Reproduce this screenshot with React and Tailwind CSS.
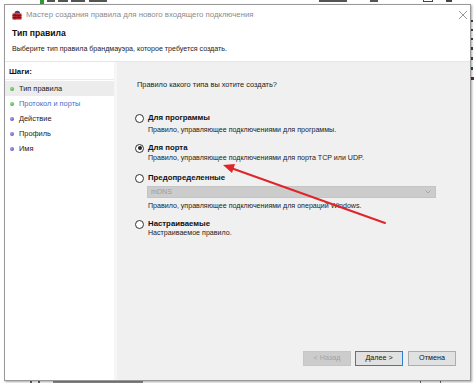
export default function App() {
  const steps = [
    { label: "Тип правила", color: "green", active: true },
    { label: "Протокол и порты", color: "green", blue: true },
    { label: "Действие", color: "purple" },
    { label: "Профиль", color: "purple" },
    { label: "Имя", color: "purple" },
  ];
  const Radio = ({ checked }) => (
    <span className="w-[9px] h-[9px] rounded-full border border-[#333] bg-white flex items-center justify-center shrink-0">
      {checked && <span className="w-[4px] h-[4px] rounded-full bg-[#222]" />}
    </span>
  );
  return (
    <div className="relative w-[474px] h-[383px] overflow-hidden bg-white font-['Liberation_Sans',Arial,sans-serif] text-[#111]">
      {/* background window fragments (bottoms of letters peeking above the dialog) */}
      <div className="absolute left-[40px] top-0 flex items-start gap-[1px]">
        <span className="w-[4px] h-[4px] bg-[#2f9a2f]" />
        <span className="ml-[2px] w-[8px] h-[2px] bg-[#555]" />
        <span className="ml-[2px] w-[10px] h-[2px] bg-[#555]" />
        <span className="ml-[2px] w-[14px] h-[2px] bg-[#555]" />
        <span className="ml-[3px] w-[18px] h-[2px] bg-[#555]" />
      </div>
      <div className="absolute left-[319px] top-0 w-[28px] h-[2px] bg-[#555]" />
      <div className="absolute left-[370px] top-0 w-[8px] h-[2px] bg-[#555]" />
      <div className="absolute left-[423px] top-[-2px] w-[10px] h-[4px] border border-[#444]" />
      <div className="absolute left-[446px] top-[0px] w-[6px] h-[2px] bg-[#444]" />
      <div className="absolute left-[471px] top-[20px] flex flex-col gap-[7px]">
        <span className="w-[2px] h-[2px] bg-[#444]" />
        <span className="w-[2px] h-[2px] bg-[#444]" />
        <span className="w-[2px] h-[2px] bg-[#444]" />
        <span className="w-[2px] h-[3px] bg-[#444]" />
        <span className="w-[2px] h-[3px] bg-[#444]" />
        <span className="w-[2px] h-[3px] bg-[#444]" />
        <span className="w-[3px] h-[3px] bg-[#5a2a5a]" />
      </div>
      <div className="absolute left-[53px] top-[381px] w-[90px] h-[2px] bg-[#8f8f8f]" />
      <div className="absolute left-[30px] top-[381px] w-[2px] h-[2px] bg-[#666]" />
      <div className="absolute left-[38px] top-[381px] w-[2px] h-[2px] bg-[#666]" />
      <div className="absolute left-[420px] top-[381px] w-[1px] h-[2px] bg-[#666]" />
      <div className="absolute left-[440px] top-[381px] w-[1px] h-[2px] bg-[#666]" />

      {/* dialog window */}
      <div className="absolute left-[4px] top-[4px] w-[467px] h-[377px] bg-white border border-[#9a9a9a] shadow-[1px_1px_2px_rgba(0,0,0,0.35)] flex flex-col">
        {/* title bar */}
        <div className="h-[20px] flex items-center pl-[7px] pr-[2px] shrink-0">
          <svg width="10" height="10" viewBox="0 0 10 10" className="shrink-0">
            <rect x="0.5" y="3.5" width="9" height="6" fill="#b0252a" />
            <path d="M0.5 5.5h9M0.5 7.5h9M3 3.5v2M6.5 5.5v2M3 7.5v2" stroke="#6e1015" strokeWidth="0.7" />
            <path d="M2.5 3.5a2.8 2.8 0 0 1 5.6 0z" fill="#5b3a5a" />
          </svg>
          <span className="ml-[4px] text-[7.8px] text-[#8b8b8b] whitespace-nowrap">
            Мастер создания правила для нового входящего подключения
          </span>
          <svg width="10" height="10" viewBox="0 0 10 10" className="ml-auto">
            <path d="M1 1L9 9M9 1L1 9" stroke="#7d7d7d" strokeWidth="0.8" />
          </svg>
        </div>
        {/* header */}
        <div className="h-[37px] shrink-0 pl-[7px] pt-[3px] border-b border-[#e6e6e6]">
          <div className="text-[8.6px] font-bold leading-[11px] text-[#111]">Тип правила</div>
          <div className="mt-[5px] text-[7.1px] leading-[10px] text-[#222]">
            Выберите тип правила брандмауэра, которое требуется создать.
          </div>
        </div>
        {/* body */}
        <div className="flex flex-1 min-h-0">
          <div className="w-[109px] shrink-0 bg-white pt-[4px]">
            <div className="pl-[4px] h-[14px] text-[7.8px] font-bold leading-[12px] border-b border-[#ececec]">Шаги:</div>
            <div className="mt-[1px] flex flex-col">
              {steps.map((s) => (
                <div
                  key={s.label}
                  className={`h-[15px] flex items-center pl-[5px] ${s.active ? "bg-[#ececec]" : ""}`}
                >
                  <span
                    className={`w-[4px] h-[4px] rounded-full shrink-0 ${
                      s.color === "green"
                        ? "bg-[radial-gradient(circle_at_35%_35%,#9be08e,#2f9a2f)]"
                        : "bg-[radial-gradient(circle_at_35%_35%,#a9a2f0,#4a3fb0)]"
                    }`}
                  />
                  <span className={`ml-[5px] text-[7.4px] whitespace-nowrap ${s.blue ? "text-[#3f6fc6]" : "text-[#1a1a1a]"}`}>
                    {s.label}
                  </span>
                </div>
              ))}
            </div>
          </div>
          <div className="flex-1 bg-[#f0f0f0] border-l-[3px] border-[#f6f6f6] flex flex-col pl-[18px] pr-[14px]">
            <div className="mt-[18px] ml-[2px] text-[7.4px] leading-[10px] text-[#1a1a1a]">
              Правило какого типа вы хотите создать?
            </div>
            <div className="mt-[23px] flex items-center gap-[4px]">
              <Radio />
              <span className="text-[7.8px] font-bold leading-[10px]">Для программы</span>
            </div>
            <div className="ml-[13px] mt-[2px] text-[7.1px] leading-[10px] text-[#222]">
              Правило, управляющее подключениями для программы.
            </div>
            <div className="mt-[8px] flex items-center gap-[4px]">
              <Radio checked />
              <span className="text-[7.8px] font-bold leading-[10px]">Для порта</span>
            </div>
            <div className="ml-[13px] mt-[0px] text-[7.1px] leading-[10px] text-[#222]">
              Правило, управляющее подключениями для порта TCP или UDP.
            </div>
            <div className="mt-[10px] flex items-center gap-[4px]">
              <Radio />
              <span className="text-[7.8px] font-bold leading-[10px]">Предопределенные</span>
            </div>
            <div className="ml-[12px] mt-[3px] mr-[20px] h-[12px] bg-[#cccccc] border border-[#c4c4c4] flex items-center pl-[3px] pr-[4px]">
              <span className="text-[7.1px] text-[#9c9c9c] leading-[10px]">mDNS</span>
              <svg width="6" height="4" viewBox="0 0 6 4" className="ml-auto">
                <path d="M0.5 0.5L3 3L5.5 0.5" stroke="#9c9c9c" strokeWidth="0.8" fill="none" />
              </svg>
            </div>
            <div className="ml-[13px] mt-[3px] text-[7.1px] leading-[10px] text-[#222]">
              Правило, управляющее подключениями для операций Windows.
            </div>
            <div className="mt-[8px] flex items-center gap-[4px]">
              <Radio />
              <span className="text-[7.8px] font-bold leading-[10px]">Настраиваемые</span>
            </div>
            <div className="ml-[13px] mt-[-1px] text-[7.1px] leading-[10px] text-[#222]">
              Настраиваемое правило.
            </div>
            <div className="mt-auto mb-[14px] flex justify-end gap-[4px]">
              <div className="w-[48px] h-[15px] bg-[#cccccc] border border-[#c6c6c6] flex items-center justify-center text-[7.2px] text-[#a3a3a3]">
                &lt; Назад
              </div>
              <div className="w-[48px] h-[15px] bg-[#e1e1e1] border-[1.5px] border-[#2a7fd4] flex items-center justify-center text-[7.2px] text-[#111]">
                Далее &gt;
              </div>
              <div className="w-[48px] h-[15px] bg-[#e1e1e1] border border-[#adadad] flex items-center justify-center text-[7.2px] text-[#111] ml-[1px]">
                Отмена
              </div>
            </div>
          </div>
        </div>
      </div>

      {/* red arrow overlay */}
      <svg className="absolute left-0 top-0 pointer-events-none" width="474" height="383" viewBox="0 0 474 383">
        <line x1="385" y1="223" x2="231" y2="168" stroke="#e0252a" strokeWidth="2" strokeLinecap="round" />
        <polygon points="223,165 235,164 232,173" fill="#e0252a" />
      </svg>
    </div>
  );
}
